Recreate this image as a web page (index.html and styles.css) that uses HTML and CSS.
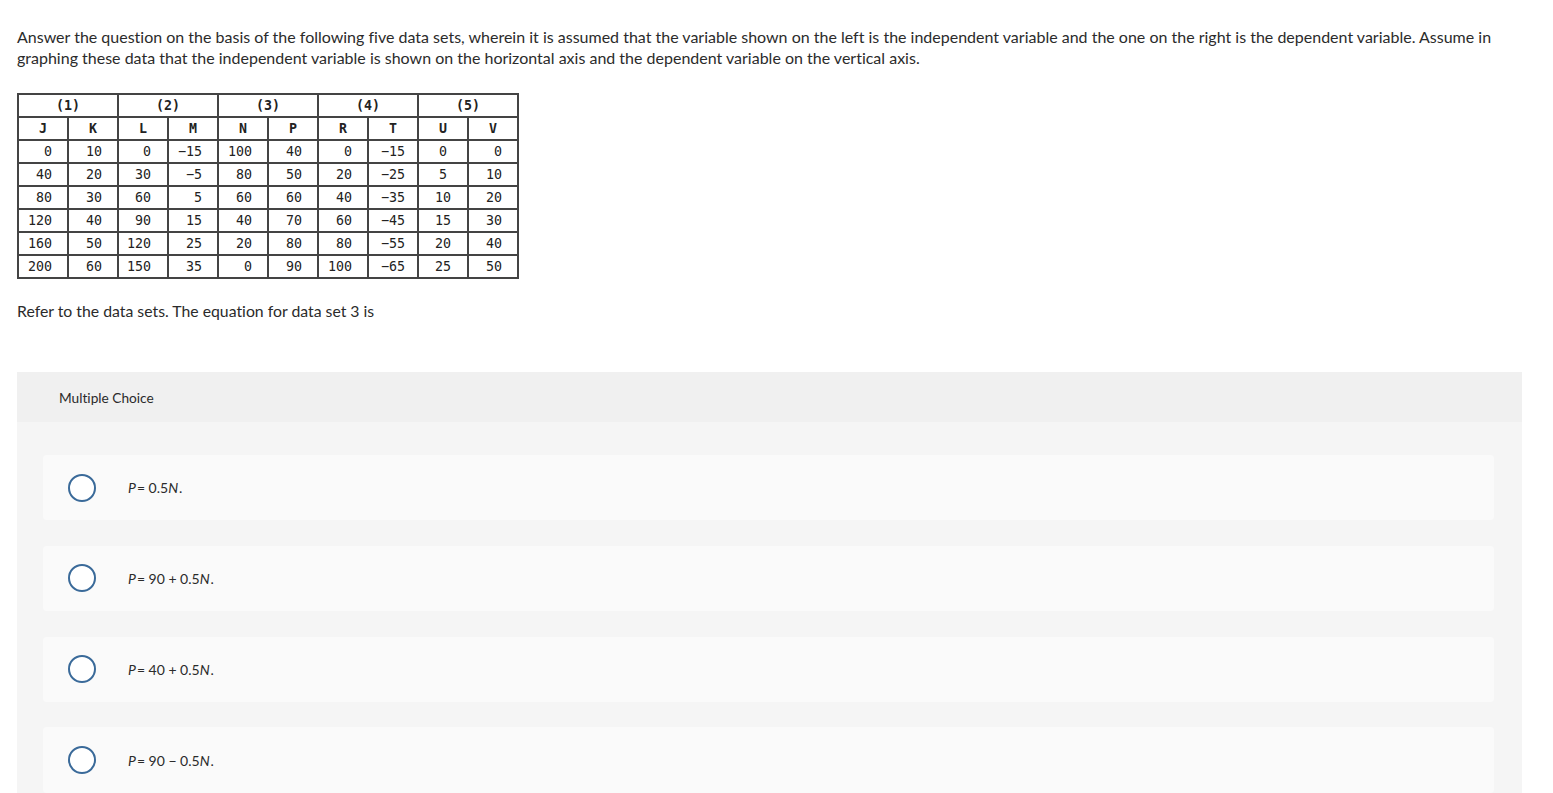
FILE: index.html
```html
<!DOCTYPE html>
<html>
<head>
<meta charset="utf-8">
<link rel="stylesheet" href="styles.css">
</head>
<body>
<div class="page">
  <p class="intro">Answer the question on the basis of the following five data sets, wherein it is assumed that the variable shown on the left is the independent variable and the one on the right is the dependent variable. Assume in graphing these data that the independent variable is shown on the horizontal axis and the dependent variable on the vertical axis.</p>
  <table class="data">
    <tr class="sets"><th colspan="2">(1)</th><th colspan="2">(2)</th><th colspan="2">(3)</th><th colspan="2">(4)</th><th colspan="2">(5)</th></tr>
    <tr class="vars"><th>J</th><th>K</th><th>L</th><th>M</th><th>N</th><th>P</th><th>R</th><th>T</th><th>U</th><th>V</th></tr>
    <tr><td>0</td><td>10</td><td class="l">0</td><td>−15</td><td>100</td><td>40</td><td>0</td><td class="c">−15</td><td class="c">0</td><td>0</td></tr>
    <tr><td>40</td><td>20</td><td class="l">30</td><td>−5</td><td>80</td><td>50</td><td>20</td><td class="c">−25</td><td class="c">5</td><td>10</td></tr>
    <tr><td>80</td><td>30</td><td class="l">60</td><td>5</td><td>60</td><td>60</td><td>40</td><td class="c">−35</td><td class="c">10</td><td>20</td></tr>
    <tr><td>120</td><td>40</td><td class="l">90</td><td>15</td><td>40</td><td>70</td><td>60</td><td class="c">−45</td><td class="c">15</td><td>30</td></tr>
    <tr><td>160</td><td>50</td><td class="l">120</td><td>25</td><td>20</td><td>80</td><td>80</td><td class="c">−55</td><td class="c">20</td><td>40</td></tr>
    <tr><td>200</td><td>60</td><td class="l">150</td><td>35</td><td>0</td><td>90</td><td>100</td><td class="c">−65</td><td class="c">25</td><td>50</td></tr>
  </table>
  <p class="question">Refer to the data sets. The equation for data set 3 is</p>
  <div class="mc">
    <div class="mc-head">Multiple Choice</div>
    <div class="mc-body">
      <div class="opt"><span class="radio"></span><span class="ans"><i>P</i>= 0.5<i>N</i>.</span></div>
      <div class="opt"><span class="radio"></span><span class="ans"><i>P</i>= 90 + 0.5<i>N</i>.</span></div>
      <div class="opt"><span class="radio"></span><span class="ans"><i>P</i>= 40 + 0.5<i>N</i>.</span></div>
      <div class="opt"><span class="radio"></span><span class="ans"><i>P</i>= 90 &minus; 0.5<i>N</i>.</span></div>
    </div>
  </div>
</div>
</body>
</html>
```

FILE: styles.css
```css
html, body {
  margin: 0;
  padding: 0;
  background: #fff;
}
.page {
  padding: 26px 31px 0 17px;
  font-family: "Lato", "Liberation Sans", sans-serif;
  font-variant-ligatures: none;
  color: #2b2b2b;
}
.intro {
  margin: 0;
  font-size: 16px;
  line-height: 21px;
}
.data {
  margin-top: 25px;
  border-collapse: separate;
  border-spacing: 0;
  border: 1px solid #444;
  font-family: "DejaVu Sans Mono", monospace;
  font-size: 13.3px;
  color: #222;
}
.data th, .data td {
  border: 1px solid #444;
  height: 21px;
  padding: 0;
  line-height: 21px;
  width: 48px;
}
.data th {
  text-align: center;
  font-weight: bold;
}
.data td {
  text-align: right;
  padding-right: 15px;
  width: 33px;
}
.data td.l {
  padding-right: 16px;
  width: 32px;
}
.data td.c {
  text-align: center;
  padding-right: 0;
  width: 47px;
}
.question {
  margin: 21px 0 0;
  font-size: 15.8px;
  line-height: 21px;
}
.mc {
  margin-top: 51px;
  background: #f5f5f5;
}
.mc-head {
  height: 50px;
  background: #f0f0f0;
  display: flex;
  align-items: center;
  padding-left: 42px;
  font-size: 13.7px;
}
.mc-body {
  padding: 33px 28px 0 26px;
  display: flex;
  flex-direction: column;
  gap: 25.5px;
}
.opt {
  height: 65.3px;
  background: #fafafa;
  border-radius: 4px;
  display: flex;
  align-items: center;
  padding-left: 25px;
}
.radio {
  width: 24px;
  height: 24px;
  border: 2px solid #3a6a99;
  border-radius: 50%;
  background: #fff;
  flex: none;
}
.ans {
  margin-left: 32px;
  font-size: 14px;
  color: #2b2b2b;
}
.ans i {
  font-style: oblique 10deg;
  margin-right: 1px;
}
```
